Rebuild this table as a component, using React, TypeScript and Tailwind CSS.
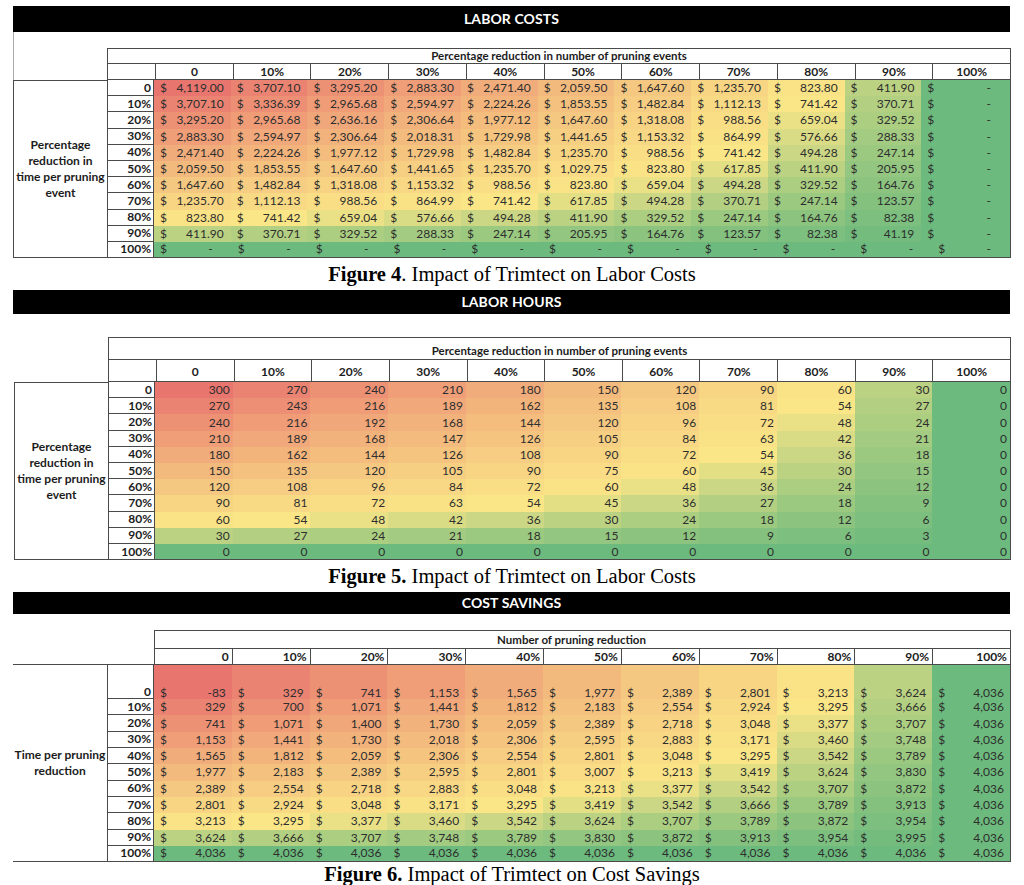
import React from "react";

type RGB = [number, number, number];
const GREEN: RGB = [108, 186, 125];
const YELLOW: RGB = [250, 230, 135];
const RED: RGB = [233, 117, 111];

function mix(a: RGB, b: RGB, t: number): string {
  const c = a.map((v, i) => Math.round(v + (b[i] - v) * t));
  return `rgb(${c[0]},${c[1]},${c[2]})`;
}

// lowColor at min, yellow at mid, highColor at max
function scale(v: number, min: number, mid: number, max: number, reverse: boolean): string {
  const lo = reverse ? RED : GREEN;
  const hi = reverse ? GREEN : RED;
  if (v <= mid) {
    const t = mid === min ? 0 : (v - min) / (mid - min);
    return mix(lo, YELLOW, Math.max(0, Math.min(1, t)));
  }
  const t = (v - mid) / (max - mid);
  return mix(YELLOW, hi, Math.max(0, Math.min(1, t)));
}

const STEPS = [0, 1, 2, 3, 4, 5, 6, 7, 8, 9, 10];
const colLabels = STEPS.map((s) => (s === 0 ? "0" : `${s * 10}%`));

const fmt2 = (n: number) =>
  n.toLocaleString("en-US", { minimumFractionDigits: 2, maximumFractionDigits: 2 });
const fmt0 = (n: number) => n.toLocaleString("en-US", { maximumFractionDigits: 0 });

const base = (i: number, j: number) => ((10 - i) * (10 - j)) / 100;
const saving = (i: number, j: number) => 4119 * (1 - base(i, j)) - 82.62;

function BlackBar({ title, h }: { title: string; h: string }) {
  return (
    <div
      className={`ml-[13px] w-[997px] ${h} bg-black text-white flex items-center justify-center font-bold text-[14px] tracking-[0.1px]`}
    >
      {title}
    </div>
  );
}

function Caption({ num, rest, h }: { num: string; rest: string; h: string }) {
  return (
    <div
      className={`${h} flex items-center justify-center text-[20.5px] text-black`}
      style={{ fontFamily: '"Liberation Serif", "Times New Roman", serif' }}
    >
      <span>
        <b>{num}</b>
        {rest}
      </span>
    </div>
  );
}

function RowHead({ label, h, top, items }: { label: string; h: string; top?: boolean; items?: string }) {
  return (
    <div
      className={`w-[47px] shrink-0 ${h} border-l border-r border-b ${top ? "border-t" : ""} border-[#4a4a4a] bg-white flex ${items ?? "items-center"} justify-end pr-[2px] font-bold`}
    >
      {label}
    </div>
  );
}

function LaborCosts() {
  const min = 0,
    mid = 4119 * 0.18,
    max = 4119;
  return (
    <div className="ml-[13px] w-[998px] flex">
      <div className="w-[94px] shrink-0 flex flex-col">
        <div className="h-[48px] border-l border-[#aaa]" />
        <div className="flex-1 border-l border-t border-b border-[#4a4a4a] flex items-center justify-center text-center font-bold leading-[16px]">
          <span>
            Percentage
            <br />
            reduction in
            <br />
            time per pruning
            <br />
            event
          </span>
        </div>
      </div>
      <div className="flex-1 flex flex-col">
        <div className="h-[16px]" />
        <div className="h-[15px] border-t border-l border-r border-[#4a4a4a] flex items-center justify-center font-bold text-[11.5px]">
          Percentage reduction in number of pruning events
        </div>
        <div className="h-[17px] flex border border-[#4a4a4a]">
          <div className="w-[47px] shrink-0" />
          {colLabels.map((c) => (
            <div
              key={c}
              className="flex-1 basis-0 min-w-0 border-l border-[#4a4a4a] flex items-center justify-center font-bold"
            >
              {c}
            </div>
          ))}
        </div>
        <div className="flex flex-col">
          {STEPS.map((i) => (
            <div key={i} className="flex">
              <RowHead label={colLabels[i]} h="h-[16.2px]" />
              <div className={`flex-1 flex border-r border-[#4a4a4a] ${i === 10 ? "border-b" : ""}`}>
                {STEPS.map((j) => {
                  const v = 4119 * base(i, j);
                  return (
                    <div
                      key={j}
                      className={`flex-1 basis-0 min-w-0 flex items-center justify-between pl-[6px] ${v === 0 ? "pr-[19px]" : "pr-[7px]"} text-[#2e2e2e]`}
                      style={{ backgroundColor: scale(v, min, mid, max, false) }}
                    >
                      <span>$</span>
                      <span>{v === 0 ? "-" : fmt2(v)}</span>
                    </div>
                  );
                })}
              </div>
            </div>
          ))}
        </div>
      </div>
    </div>
  );
}

function LaborHours() {
  const min = 0,
    mid = 54,
    max = 300;
  return (
    <div className="ml-[14px] w-[997px] flex">
      <div className="w-[94px] shrink-0 flex flex-col">
        <div className="h-[68px]" />
        <div className="flex-1 border-l border-t border-b border-[#4a4a4a] flex items-center justify-center text-center font-bold leading-[16px]">
          <span>
            Percentage
            <br />
            reduction in
            <br />
            time per pruning
            <br />
            event
          </span>
        </div>
      </div>
      <div className="flex-1 flex flex-col">
        <div className="h-[23px]" />
        <div className="h-[22px] border-t border-l border-r border-[#4a4a4a] flex items-center justify-center font-bold text-[11.5px] pt-[4px]">
          Percentage reduction in number of pruning events
        </div>
        <div className="h-[23px] flex border border-[#4a4a4a]">
          <div className="w-[47px] shrink-0" />
          {colLabels.map((c) => (
            <div
              key={c}
              className="flex-1 basis-0 min-w-0 border-l border-[#4a4a4a] flex items-center justify-center font-bold pt-[3px]"
            >
              {c}
            </div>
          ))}
        </div>
        <div className="flex flex-col">
          {STEPS.map((i) => (
            <div key={i} className="flex">
              <RowHead label={colLabels[i]} h="h-[16.2px]" />
              <div className={`flex-1 flex border-r border-[#4a4a4a] ${i === 10 ? "border-b" : ""}`}>
                {STEPS.map((j) => {
                  const v = Math.round(300 * base(i, j));
                  return (
                    <div
                      key={j}
                      className="flex-1 basis-0 min-w-0 flex items-center justify-end pr-[3px] text-[#2e2e2e]"
                      style={{ backgroundColor: scale(v, min, mid, max, false) }}
                    >
                      {v}
                    </div>
                  );
                })}
              </div>
            </div>
          ))}
        </div>
      </div>
    </div>
  );
}

function CostSavings() {
  const min = saving(0, 0),
    mid = saving(8, 1),
    max = saving(10, 10);
  return (
    <div className="ml-[13px] w-[998px] flex flex-col">
      <div className="h-[16px]" />
      <div className="flex">
        <div className="w-[141px] shrink-0" />
        <div className="flex-1 flex flex-col border border-b-0 border-[#4a4a4a]">
          <div className="h-[17px] flex items-center justify-center font-bold text-[11.5px] pr-[22px]">
            Number of pruning reduction
          </div>
          <div className="h-[16px] flex border-t border-[#4a4a4a]">
            {colLabels.map((c, k) => (
              <div
                key={c}
                className={`flex-1 basis-0 min-w-0 ${k > 0 ? "border-l" : ""} border-[#4a4a4a] flex items-center justify-end pr-[3px] font-bold`}
              >
                {c}
              </div>
            ))}
          </div>
        </div>
      </div>
      <div className="flex border-t border-[#4a4a4a]">
        <div className="w-[94px] shrink-0 border-b border-[#4a4a4a] flex items-center justify-center text-center font-bold leading-[16px]">
          <span>
            Time per pruning
            <br />
            reduction
          </span>
        </div>
        <div className="flex-1 flex flex-col">
          {STEPS.map((i) => (
            <div key={i} className="flex">
              <RowHead
                label={colLabels[i]}
                h={i === 0 ? "h-[34px]" : "h-[16.3px]"}
                items={i === 0 ? "items-end" : "items-center"}
              />
              <div className={`flex-1 flex border-r border-[#4a4a4a] ${i === 10 ? "border-b" : ""}`}>
                {STEPS.map((j) => {
                  const v = saving(i, j);
                  return (
                    <div
                      key={j}
                      className={`flex-1 basis-0 min-w-0 flex ${i === 0 ? "items-end" : "items-center"} justify-between pl-[6px] pr-[6px] text-[#2e2e2e]`}
                      style={{ backgroundColor: scale(v, min, mid, max, true) }}
                    >
                      <span>$</span>
                      <span>{fmt0(Math.round(v))}</span>
                    </div>
                  );
                })}
              </div>
            </div>
          ))}
        </div>
      </div>
    </div>
  );
}

export default function App() {
  return (
    <div
      className="w-[1024px] h-[885px] bg-white overflow-hidden text-[12px] text-[#1c1c1c] leading-none"
      style={{ fontFamily: 'Lato, "Open Sans", sans-serif' }}
    >
      <div className="h-[6px]" />
      <BlackBar title="LABOR COSTS" h="h-[26px]" />
      <LaborCosts />
      <Caption num="Figure 4" rest=". Impact of Trimtect on Labor Costs" h="h-[32px]" />
      <BlackBar title="LABOR HOURS" h="h-[24px]" />
      <LaborHours />
      <Caption num="Figure 5." rest=" Impact of Trimtect on Labor Costs" h="h-[32px]" />
      <BlackBar title="COST SAVINGS" h="h-[22px]" />
      <CostSavings />
      <Caption num="Figure 6." rest=" Impact of Trimtect on Cost Savings" h="h-[25px]" />
    </div>
  );
}
